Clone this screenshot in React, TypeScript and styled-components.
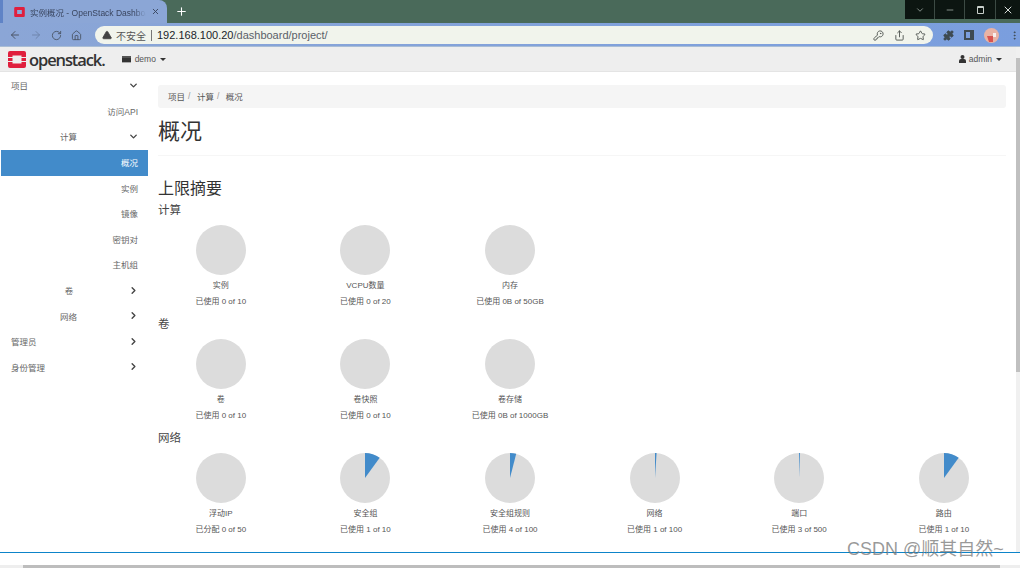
import React from "react";
import styled, { createGlobalStyle } from "styled-components";
import {
  ArrowLeft,
  ArrowRight,
  RotateCw,
  Home,
  Plus,
  X,
  Minus,
  ChevronDown,
  ChevronRight,
  KeyRound,
  Share,
  Star,
  Puzzle,
  MoreVertical,
  TriangleAlert,
} from "lucide-react";

const SANS = `"Liberation Sans", "Noto Sans CJK SC", sans-serif`;

const GlobalStyle = createGlobalStyle`
  html, body {
    margin: 0;
    padding: 0;
    background: #fff;
    font-family: ${SANS};
  }
  * { box-sizing: border-box; }
`;

const Frame = styled.div`
  position: relative;
  width: 1020px;
  height: 568px;
  display: flex;
  flex-direction: column;
  overflow: hidden;
  background: #fff;
`;

/* browser chrome */
const TabStrip = styled.div`
  height: 23px;
  flex: none;
  display: flex;
  align-items: flex-start;
  background: #4a6a5a;
`;

const Tab = styled.div`
  width: 167px;
  height: 23px;
  display: flex;
  align-items: center;
  gap: 5px;
  padding: 0 7px 0 11px;
  background: #8ba6d6;
  border-left: 3px solid #5f83c6;
  border-radius: 0 8px 0 0;
  color: #3a4660;
  font-size: 8.5px;
  white-space: nowrap;
`;

const TabTitle = styled.span`
  flex: 1;
  overflow: hidden;
  mask-image: linear-gradient(90deg, #000 90%, transparent);
`;

const NewTab = styled.div`
  width: 28px;
  height: 23px;
  display: flex;
  align-items: center;
  justify-content: center;
  color: #fff;
`;

const Spacer = styled.div`
  flex: 1;
`;

const WindowControls = styled.div`
  display: flex;
  height: 19px;
  background: #0c1511;
`;

const WindowButton = styled.div<{ $width: number }>`
  width: ${(p) => p.$width}px;
  display: flex;
  align-items: center;
  justify-content: center;
  color: #9aa5a0;
  border-right: 1px solid #3c4a44;
  &:last-child {
    border-right: none;
  }
`;

const RestoreGlyph = styled.div`
  width: 7px;
  height: 8px;
  border: 1px solid #c8cfcb;
  border-top-width: 2px;
  border-radius: 1px;
`;

const Toolbar = styled.div`
  height: 24px;
  flex: none;
  display: flex;
  align-items: center;
  padding: 1px 0 0 9px;
  background: linear-gradient(90deg, #8ba6d6, #7a9ede);
  border-bottom: 1px solid #a9bdd5;
  color: #4c5668;
`;

const NavIcons = styled.div`
  width: 86px;
  flex: none;
  display: flex;
  align-items: center;
  gap: 9px;
`;

const UrlPill = styled.div`
  width: 838px;
  height: 18px;
  flex: none;
  display: flex;
  align-items: center;
  padding: 0 7px 0 7px;
  background: #f1f4ec;
  border-radius: 9px;
  font-size: 11px;
  color: #5a6068;
  white-space: nowrap;
`;

const InsecureLabel = styled.span`
  margin-left: 4px;
  font-size: 10px;
  color: #555;
`;

const UrlDivider = styled.span`
  width: 1px;
  height: 11px;
  margin: 0 5px;
  background: #777;
`;

const UrlHost = styled.span`
  color: #20242a;
`;

const UrlPath = styled.span`
  flex: 1;
  color: #5a6068;
`;

const PillIcons = styled.div`
  display: flex;
  gap: 10px;
  color: #4f5450;
`;

const ExtensionIcons = styled.div`
  display: flex;
  align-items: center;
  gap: 10px;
  margin-left: 10px;
  color: #3e4a52;
`;

const SidePanelGlyph = styled.div`
  width: 10px;
  height: 10px;
  border: 2px solid #3e4a52;
  border-right-width: 4px;
`;

const Avatar = styled.svg`
  display: block;
  width: 15px;
  height: 15px;
`;

/* the page below the browser toolbar, with its scrollbar beside it */
const Viewport = styled.div`
  flex: 1;
  min-height: 0;
  display: flex;
`;

const PageColumn = styled.div`
  flex: 1;
  min-width: 0;
  display: flex;
  flex-direction: column;
`;

/* openstack navbar */
const NavBar = styled.div`
  height: 25px;
  flex: none;
  display: flex;
  align-items: center;
  padding: 0 14px 0 8px;
  background: #eeeeee;
  border-bottom: 1px solid #e4e4e4;
  font-size: 8.5px;
  color: #555;
`;

const LogoMark = styled.svg`
  display: block;
  width: 18px;
  height: 17px;
`;

const LogoText = styled.span`
  margin-left: 3px;
  font-family: "Open Sans", sans-serif;
  font-size: 16.5px;
  font-weight: 600;
  letter-spacing: -1.1px;
  color: #333;
`;

const ProjectMenu = styled.div`
  display: flex;
  align-items: center;
  gap: 3px;
  margin-left: 17px;
`;

const ServerGlyph = styled.div`
  width: 9px;
  height: 7px;
  margin-right: 1px;
  background: #333;
  border-top: 2px solid #555;
  border-bottom: 1px solid #aaa;
`;

const Caret = styled.span`
  width: 0;
  height: 0;
  margin-left: 1px;
  border-left: 3px solid transparent;
  border-right: 3px solid transparent;
  border-top: 3px solid #333;
`;

const UserMenu = styled.div`
  display: flex;
  align-items: center;
  gap: 3px;
`;

const UserGlyph = styled.svg`
  display: block;
  width: 7px;
  height: 8px;
`;

/* page body */
const Body = styled.div`
  flex: 1;
  min-height: 0;
  display: flex;
  overflow: hidden;
`;

const Sidebar = styled.nav`
  width: 148px;
  flex: none;
  padding: 1.5px 0 0 1px;
`;

const SideRow = styled.div<{ $level: number; $active?: boolean }>`
  height: 25.6px;
  display: flex;
  align-items: center;
  justify-content: ${(p) => (p.$level === 2 ? "flex-end" : "space-between")};
  padding: ${(p) => (p.$level === 0 ? "0 9px 2px 10px" : p.$level === 1 ? "0 9px 2px 59px" : "0 10px 2px 0")};
  font-size: 8.5px;
  color: ${(p) => (p.$active ? "#fff" : "#666")};
  background: ${(p) => (p.$active ? "#428bca" : "transparent")};
`;

const SideLabel = styled.span<{ $centered?: boolean }>`
  ${(p) => (p.$centered ? "width: 18px; text-align: center;" : "")}
`;

const Chevron = styled.span`
  display: flex;
  color: #444;
`;

const Main = styled.main`
  flex: 1;
  min-width: 0;
  padding: 13px 10px 0 10px;
`;

const Breadcrumb = styled.div`
  height: 23px;
  display: flex;
  align-items: center;
  gap: 3px;
  padding: 0 0 2px 10px;
  background: #f5f5f5;
  border-radius: 3px;
  font-size: 8.5px;
  color: #555;
`;

const CrumbSep = styled.span`
  color: #999;
  margin-right: 3.5px;
`;

const PageHeader = styled.div`
  height: 48px;
  padding-top: 10px;
  border-bottom: 1px solid #f6f6f6;
`;

const PageTitle = styled.h1`
  margin: 0;
  font-size: 22px;
  line-height: 28px;
  font-weight: 400;
  color: #333;
`;

const SectionTitle = styled.h2`
  margin: 23px 0 4px;
  font-size: 16px;
  line-height: 20px;
  font-weight: 400;
  color: #333;
`;

const GroupTitle = styled.h3`
  margin: 0;
  height: 15px;
  font-size: 11.5px;
  line-height: 15px;
  font-weight: 400;
  color: #444;
`;

const ChartRow = styled.div`
  height: 99px;
  margin-left: -9.5px;
  padding-top: 7px;
  display: grid;
  grid-template-columns: repeat(6, 144.6px);
`;

const Chart = styled.div`
  display: flex;
  flex-direction: column;
  align-items: center;
  font-size: 8px;
  color: #555;
  white-space: nowrap;
`;

const PieSvg = styled.svg`
  display: block;
  width: 50px;
  height: 50px;
`;

const ChartName = styled.div`
  margin-top: 5px;
  line-height: 11px;
`;

const ChartUsage = styled.div`
  margin-top: 5px;
  line-height: 11px;
`;

const ScrollTrack = styled.div`
  width: 4px;
  flex: none;
  background: #f0f0f0;
  padding-top: 11px;
`;

const ScrollThumb = styled.div`
  height: 314px;
  background: #c0c0c0;
`;

const BottomRule = styled.div`
  height: 13px;
  flex: none;
  border-top: 1px solid #0d84c9;
  background: #fff;
`;

const BottomBar = styled.div`
  height: 3px;
  flex: none;
  padding: 0 20px 0 23px;
  background: #eeeeee;
`;

const BottomThumb = styled.div`
  height: 3px;
  background: #bdbdbd;
`;

const Watermark = styled.div`
  position: absolute;
  left: 847px;
  top: 538px;
  font-size: 18px;
  line-height: 22px;
  color: rgba(120, 120, 120, 0.75);
  white-space: nowrap;
`;

interface ChartData {
  name: string;
  usage: string;
  percent: number;
}

const GROUPS: { title: string; charts: ChartData[] }[] = [
  {
    title: "计算",
    charts: [
      { name: "实例", usage: "已使用 0 of 10", percent: 0 },
      { name: "VCPU数量", usage: "已使用 0 of 20", percent: 0 },
      { name: "内存", usage: "已使用 0B of 50GB", percent: 0 },
    ],
  },
  {
    title: "卷",
    charts: [
      { name: "卷", usage: "已使用 0 of 10", percent: 0 },
      { name: "卷快照", usage: "已使用 0 of 10", percent: 0 },
      { name: "卷存储", usage: "已使用 0B of 1000GB", percent: 0 },
    ],
  },
  {
    title: "网络",
    charts: [
      { name: "浮动IP", usage: "已分配 0 of 50", percent: 0 },
      { name: "安全组", usage: "已使用 1 of 10", percent: 10 },
      { name: "安全组规则", usage: "已使用 4 of 100", percent: 4 },
      { name: "网络", usage: "已使用 1 of 100", percent: 1 },
      { name: "端口", usage: "已使用 3 of 500", percent: 0.6 },
      { name: "路由", usage: "已使用 1 of 10", percent: 10 },
    ],
  },
];

const SIDE_ITEMS: { label: string; level: number; open?: boolean; closed?: boolean; active?: boolean; centered?: boolean }[] = [
  { label: "项目", level: 0, open: true },
  { label: "访问API", level: 2 },
  { label: "计算", level: 1, open: true },
  { label: "概况", level: 2, active: true },
  { label: "实例", level: 2 },
  { label: "镜像", level: 2 },
  { label: "密钥对", level: 2 },
  { label: "主机组", level: 2 },
  { label: "卷", level: 1, closed: true, centered: true },
  { label: "网络", level: 1, closed: true },
  { label: "管理员", level: 0, closed: true },
  { label: "身份管理", level: 0, closed: true },
];

function Pie({ percent }: { percent: number }) {
  const angle = (percent / 100) * 2 * Math.PI;
  const x = 25 + 25 * Math.sin(angle);
  const y = 25 - 25 * Math.cos(angle);
  return (
    <PieSvg viewBox="0 0 50 50">
      <circle cx="25" cy="25" r="25" fill="#dcdcdc" />
      {percent > 0 && <path d={`M25 25 L25 0 A25 25 0 0 1 ${x} ${y} Z`} fill="#428bca" />}
    </PieSvg>
  );
}

function OpenStackMark() {
  return (
    <LogoMark viewBox="0 0 18 17">
      <path
        d="M2 0h14a2 2 0 0 1 2 2v4h-4.500V4.500h-9V6H0V2a2 2 0 0 1 2-2zM0 7h4.500v3H0zM13.500 7H18v3h-4.500zM0 11h4.500v1.500h9V11H18v4a2 2 0 0 1-2 2H2a2 2 0 0 1-2-2z"
        fill="#e01f3d"
      />
    </LogoMark>
  );
}

export default function App() {
  return (
    <Frame>
      <GlobalStyle />
      <TabStrip>
        <Tab>
          <svg width="11" height="10" viewBox="0 0 18 17">
            <path
              d="M2 0h14a2 2 0 0 1 2 2v13a2 2 0 0 1-2 2H2a2 2 0 0 1-2-2V2a2 2 0 0 1 2-2zM5 5v7h8V5z"
              fill="#e01f3d"
              fillRule="evenodd"
            />
          </svg>
          <TabTitle>实例概况 - OpenStack Dashboard</TabTitle>
          <X size={9} strokeWidth={2.5} />
        </Tab>
        <NewTab>
          <Plus size={13} strokeWidth={2} />
        </NewTab>
        <Spacer />
        <WindowControls>
          <WindowButton $width={30}>
            <ChevronDown size={10} />
          </WindowButton>
          <WindowButton $width={30}>
            <Minus size={10} />
          </WindowButton>
          <WindowButton $width={31}>
            <RestoreGlyph />
          </WindowButton>
          <WindowButton $width={24}>
            <X size={12} color="#d8dedb" />
          </WindowButton>
        </WindowControls>
      </TabStrip>

      <Toolbar>
        <NavIcons>
          <ArrowLeft size={12} />
          <ArrowRight size={12} color="#6e85ad" />
          <RotateCw size={11} />
          <Home size={11} />
        </NavIcons>
        <UrlPill>
          <TriangleAlert size={10} fill="#444" color="#444" />
          <InsecureLabel>不安全</InsecureLabel>
          <UrlDivider />
          <UrlHost>192.168.100.20</UrlHost>
          <UrlPath>/dashboard/project/</UrlPath>
          <PillIcons>
            <KeyRound size={11} />
            <Share size={11} />
            <Star size={11} />
          </PillIcons>
        </UrlPill>
        <ExtensionIcons>
          <Puzzle size={11} fill="#3e4a52" />
          <SidePanelGlyph />
          <Avatar viewBox="0 0 15 15">
            <circle cx="7.500" cy="7.500" r="7.500" fill="#e9b3a4" />
            <path d="M3 8h6v6H5z" fill="#d9534f" />
            <path d="M9 5h3v4H9z" fill="#f7f0ee" />
          </Avatar>
          <MoreVertical size={11} />
        </ExtensionIcons>
      </Toolbar>

      <Viewport>
        <PageColumn>
          <NavBar>
            <OpenStackMark />
            <LogoText>openstack.</LogoText>
            <ProjectMenu>
              <ServerGlyph />
              demo
              <Caret />
            </ProjectMenu>
            <Spacer />
            <UserMenu>
              <UserGlyph viewBox="0 0 7 8">
                <circle cx="3.500" cy="2" r="2" fill="#333" />
                <path d="M0 8V6a2 2 0 0 1 2-2h3a2 2 0 0 1 2 2v2z" fill="#333" />
              </UserGlyph>
              admin
              <Caret />
            </UserMenu>
          </NavBar>

          <Body>
            <Sidebar>
              {SIDE_ITEMS.map((item) => (
                <SideRow key={item.label} $level={item.level} $active={item.active}>
                  <SideLabel $centered={item.centered}>{item.label}</SideLabel>
                  {item.open && (
                    <Chevron>
                      <ChevronDown size={11} strokeWidth={3} />
                    </Chevron>
                  )}
                  {item.closed && (
                    <Chevron>
                      <ChevronRight size={11} strokeWidth={3} />
                    </Chevron>
                  )}
                </SideRow>
              ))}
            </Sidebar>
            <Main>
              <Breadcrumb>
                项目 <CrumbSep>/</CrumbSep> 计算 <CrumbSep>/</CrumbSep> 概况
              </Breadcrumb>
              <PageHeader>
                <PageTitle>概况</PageTitle>
              </PageHeader>
              <SectionTitle>上限摘要</SectionTitle>
              {GROUPS.map((group) => (
                <section key={group.title}>
                  <GroupTitle>{group.title}</GroupTitle>
                  <ChartRow>
                    {group.charts.map((chart) => (
                      <Chart key={chart.name}>
                        <Pie percent={chart.percent} />
                        <ChartName>{chart.name}</ChartName>
                        <ChartUsage>{chart.usage}</ChartUsage>
                      </Chart>
                    ))}
                  </ChartRow>
                </section>
              ))}
            </Main>
          </Body>
        </PageColumn>
        <ScrollTrack>
          <ScrollThumb />
        </ScrollTrack>
      </Viewport>
      <BottomRule />
      <BottomBar>
        <BottomThumb />
      </BottomBar>
      <Watermark>CSDN @顺其自然~</Watermark>
    </Frame>
  );
}
